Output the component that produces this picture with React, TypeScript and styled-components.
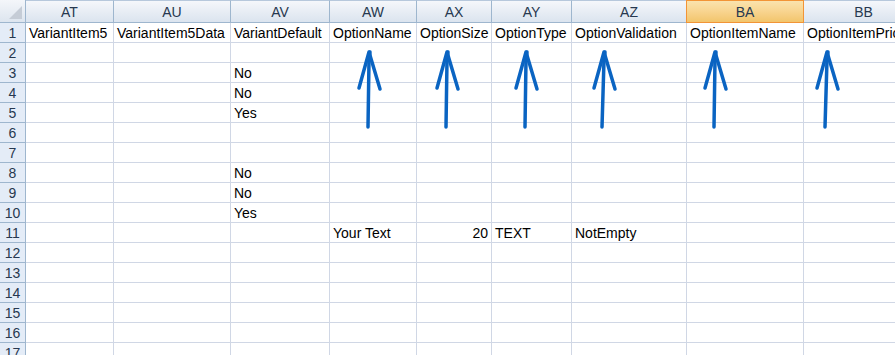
import React from "react";
import styled, { createGlobalStyle, css } from "styled-components";

const Global = createGlobalStyle`
  html, body { margin: 0; padding: 0; background: #ffffff; overflow: hidden; }
  body { font-family: "Liberation Sans", Arial, sans-serif; }
`;

const COLS = [
  { name: "AT", w: 88 },
  { name: "AU", w: 117 },
  { name: "AV", w: 99 },
  { name: "AW", w: 87 },
  { name: "AX", w: 75 },
  { name: "AY", w: 80 },
  { name: "AZ", w: 115 },
  { name: "BA", w: 117, active: true },
  { name: "BB", w: 120 },
];

type CellVal = { text: string; align?: "left" | "right" };
const DATA: Record<number, Record<string, CellVal>> = {
  1: {
    AT: { text: "VariantItem5" },
    AU: { text: "VariantItem5Data" },
    AV: { text: "VariantDefault" },
    AW: { text: "OptionName" },
    AX: { text: "OptionSize" },
    AY: { text: "OptionType" },
    AZ: { text: "OptionValidation" },
    BA: { text: "OptionItemName" },
    BB: { text: "OptionItemPrice" },
  },
  3: { AV: { text: "No" } },
  4: { AV: { text: "No" } },
  5: { AV: { text: "Yes" } },
  8: { AV: { text: "No" } },
  9: { AV: { text: "No" } },
  10: { AV: { text: "Yes" } },
  11: {
    AW: { text: "Your Text" },
    AX: { text: "20", align: "right" },
    AY: { text: "TEXT" },
    AZ: { text: "NotEmpty" },
  },
};

const Wrap = styled.div`
  position: relative;
  width: 895px;
  height: 355px;
  overflow: hidden;
  background: #ffffff;
`;

const Sheet = styled.div`
  display: grid;
  grid-template-columns: 26px ${COLS.map((c) => c.w + "px").join(" ")};
  grid-auto-rows: 20px;
  grid-template-rows: 23px;
`;

const Corner = styled.div`
  position: relative;
  box-sizing: border-box;
  border-right: 1px solid #9eb6ce;
  border-bottom: 1px solid #9eb6ce;
  background: linear-gradient(#f4f6fa, #dde5ef);
  &::after {
    content: "";
    position: absolute;
    right: 3px;
    bottom: 3px;
    width: 0;
    height: 0;
    border-left: 13px solid transparent;
    border-bottom: 13px solid #c5ccd6;
  }
`;

const ColHead = styled.div<{ $active?: boolean }>`
  box-sizing: border-box;
  display: flex;
  align-items: center;
  justify-content: center;
  padding-top: 1px;
  font-size: 14px;
  color: #27384f;
  white-space: nowrap;
  overflow: hidden;
  border-right: 1px solid #9eb6ce;
  border-bottom: 1px solid #9eb6ce;
  border-top: 1px solid #b7c8dc;
  background: linear-gradient(#f5f7fb 0%, #e9eef5 45%, #dbe4ef 100%);
  ${(p) =>
    p.$active &&
    css`
      background: linear-gradient(#fae3ae 0%, #f8d48f 50%, #f2c56c 100%);
      border-left: 1px solid #f29436;
      margin-left: -1px;
      border-right: 1px solid #f29436;
      border-bottom: 1px solid #f29436;
      border-top: 1px solid #f29436;
    `}
`;

const RowHead = styled.div`
  box-sizing: border-box;
  display: flex;
  align-items: center;
  justify-content: center;
  padding-top: 1px;
  font-size: 14px;
  color: #27384f;
  border-right: 1px solid #9eb6ce;
  border-bottom: 1px solid #9eb6ce;
  background: #e4ecf7;
`;

const Cell = styled.div<{ $align?: "left" | "right" }>`
  box-sizing: border-box;
  display: flex;
  align-items: center;
  justify-content: ${(p) => (p.$align === "right" ? "flex-end" : "flex-start")};
  padding: 1px 3px 0 3px;
  font-size: 14px;
  color: #000000;
  white-space: nowrap;
  overflow: visible;
  border-right: 1px solid #d0d7e5;
  border-bottom: 1px solid #d0d7e5;
`;

const Overlay = styled.svg`
  position: absolute;
  left: 0;
  top: 0;
  pointer-events: none;
`;

const ARROWS = [
  { tip: [370, 52], base: [368, 127] },
  { tip: [448, 52], base: [446, 127] },
  { tip: [527, 52], base: [525, 127] },
  { tip: [605, 52], base: [602, 127] },
  { tip: [716, 52], base: [714, 127] },
  { tip: [828, 52], base: [825, 127] },
];

export default function App() {
  const rows = Array.from({ length: 17 }, (_, i) => i + 1);
  return (
    <Wrap>
      <Global />
      <Sheet>
        <Corner />
        {COLS.map((c) => (
          <ColHead key={c.name} $active={c.active}>
            {c.name}
          </ColHead>
        ))}
        {rows.map((r) => (
          <React.Fragment key={r}>
            <RowHead>{r}</RowHead>
            {COLS.map((c) => {
              const v = DATA[r]?.[c.name];
              return (
                <Cell key={c.name} $align={v?.align}>
                  {v?.text ?? ""}
                </Cell>
              );
            })}
          </React.Fragment>
        ))}
      </Sheet>
      <Overlay width={895} height={355} viewBox="0 0 895 355">
        {ARROWS.map((a, i) => {
          const [tx, ty] = a.tip;
          const [bx, by] = a.base;
          return (
            <g
              key={i}
              stroke="#0a64c2"
              strokeWidth={3.5}
              strokeLinecap="round"
              strokeLinejoin="round"
              fill="none"
            >
              <path d={`M${bx} ${by} L${tx - 1} ${ty + 8} L${tx} ${ty}`} />
              <path d={`M${tx - 11} ${ty + 36} L${tx - 1} ${ty} L${tx + 10} ${ty + 37}`} />
            </g>
          );
        })}
      </Overlay>
    </Wrap>
  );
}
